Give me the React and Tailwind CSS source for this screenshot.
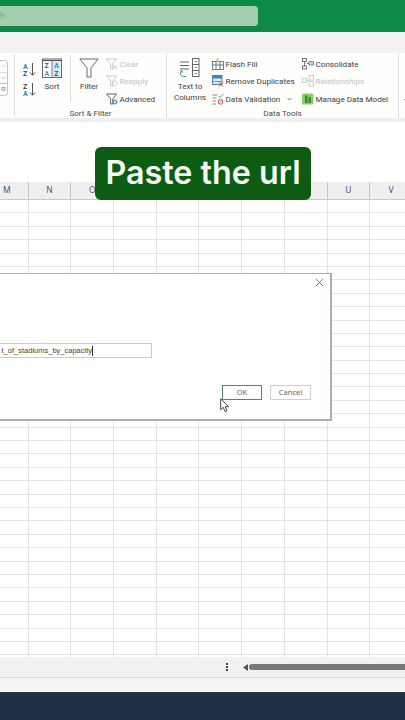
// letters under the caption are not visible in the picture
const columns = ["M", "N", "O", "", "", "", "", "", "U", "V"];
const rows = Array.from({ length: 35 }, (_, i) => i);

function SortAsc() {
  return (
    <svg width="13" height="15" viewBox="0 0 13 15" fontFamily="Roboto, sans-serif" fontSize="7" fontWeight="700">
      <text x="0" y="6.5" fill="#2f7fb8">A</text>
      <text x="0" y="14" fill="#444">Z</text>
      <path d="M9.5 1v12M6.8 10.3l2.7 3 2.7-3" fill="none" stroke="#555" strokeWidth="1" />
    </svg>
  );
}

function SortDesc() {
  return (
    <svg width="13" height="15" viewBox="0 0 13 15" fontFamily="Roboto, sans-serif" fontSize="7" fontWeight="700">
      <text x="0" y="6.5" fill="#444">Z</text>
      <text x="0" y="14" fill="#2f7fb8">A</text>
      <path d="M9.5 1v12M6.8 10.3l2.7 3 2.7-3" fill="none" stroke="#555" strokeWidth="1" />
    </svg>
  );
}

function SortBig() {
  return (
    <svg width="20" height="20" viewBox="0 0 20 20" fontFamily="Roboto, sans-serif" fontSize="7" fontWeight="500">
      <rect x="0.5" y="1" width="19" height="18.5" fill="#fff" stroke="#666" />
      <path d="M0 2.5h20" stroke="#555" strokeWidth="1.2" />
      <rect x="10.5" y="3" width="8" height="16" fill="#d5e6f2" />
      <path d="M10 2.5v17" stroke="#777" />
      <text x="2.6" y="10" fill="#444">Z</text>
      <text x="2.6" y="17.5" fill="#2f7fb8">A</text>
      <text x="12.2" y="10" fill="#2f7fb8">A</text>
      <text x="12.2" y="17.5" fill="#444">Z</text>
    </svg>
  );
}

function FunnelBig() {
  return (
    <svg width="20" height="20" viewBox="0 0 20 20">
      <path d="M0.8 1h18.4L12 9.8V19H8V9.8Z" fill="#fff" stroke="#666" strokeWidth="1" />
    </svg>
  );
}

function FunnelSmall({ color, mark }) {
  return (
    <svg width="12" height="12" viewBox="0 0 12 12" fill="none">
      <path d="M0.5 1h10L6.8 5.8V11H4.6V5.8Z" stroke={color} strokeWidth="0.9" />
      {mark === "clear" && <path d="M7.5 7.5l3.5 3.5M11 7.5l-3.5 3.5" stroke={color} strokeWidth="0.9" />}
      {mark === "reapply" && <path d="M11 7.5a2.4 2.4 0 1 0-.6 2.6M11 6.5v1.6H9.4" stroke={color} strokeWidth="0.8" />}
      {mark === "advanced" && <circle cx="9" cy="9" r="2" fill="#cfe3f1" stroke="#2f7fb8" strokeWidth="1" />}
    </svg>
  );
}

function TextToColumns() {
  return (
    <svg width="24" height="20" viewBox="0 0 24 20" fill="none">
      <path d="M2 4h9M2 7.5h9M2 11h9" stroke="#666" />
      <rect x="14.5" y="0.5" width="6.5" height="18" fill="#fff" stroke="#666" />
      <path d="M14.5 6.5h6.5M14.5 12.5h6.5" stroke="#666" />
      <path d="M16.5 3.5h2.5M16.5 9.5h2.5M16.5 15.5h2.5" stroke="#888" />
      <path d="M8 18.5H5.5a3 3 0 0 1-1.5-5.6M4 12.9l-1.8-.2M4 12.9l.2 2" stroke="#3a9a8c" />
    </svg>
  );
}

function FlashFillIcon() {
  return (
    <svg width="12" height="12" viewBox="0 0 12 12" fill="none">
      <rect x="0.5" y="3.5" width="11" height="8" stroke="#41617a" strokeWidth="0.8" />
      <path d="M0.5 7h11M4 3.5v8M8 3.5v8" stroke="#41617a" strokeWidth="0.8" />
      <path d="M5.5 0.5L3.5 4h2L4 7l3.5-4h-2L7 0.5Z" fill="#e6983c" />
    </svg>
  );
}

function RemoveDupIcon() {
  return (
    <svg width="12" height="12" viewBox="0 0 12 12" fill="none">
      <rect x="0.5" y="0.5" width="9.5" height="9" fill="#dcebf6" stroke="#3b82b5" strokeWidth="0.9" />
      <rect x="0.5" y="0.5" width="9.5" height="3" fill="#3b82b5" />
      <path d="M0.5 6.5h9.5" stroke="#3b82b5" strokeWidth="0.7" />
      <path d="M7 7.5l4 4M11 7.5l-4 4" stroke="#c8413b" strokeWidth="1" />
    </svg>
  );
}

function ValidationIcon() {
  return (
    <svg width="12" height="12" viewBox="0 0 12 12" fill="none">
      <path d="M0.5 2h5M0.5 5h4M0.5 8h3.5M0.5 11h3.5" stroke="#666" strokeWidth="0.8" />
      <path d="M6.5 3l1.5 1.5L11.5 0.8" stroke="#4d9b6f" strokeWidth="0.9" />
      <circle cx="8.6" cy="8.8" r="2.4" stroke="#c8413b" strokeWidth="0.9" />
      <path d="M7 10.4l3.2-3.2" stroke="#c8413b" strokeWidth="0.8" />
    </svg>
  );
}

function ConsolidateIcon() {
  return (
    <svg width="12" height="12" viewBox="0 0 12 12" fill="none">
      <rect x="0.5" y="0.5" width="4" height="3" stroke="#555" strokeWidth="0.8" />
      <rect x="0.5" y="8" width="4" height="3" stroke="#555" strokeWidth="0.8" />
      <rect x="7" y="3.7" width="4.5" height="3.3" fill="#bcd9ee" stroke="#3b82b5" strokeWidth="0.8" />
      <path d="M2.5 3.5V8M4.5 5.3H7" stroke="#555" strokeWidth="0.8" />
    </svg>
  );
}

function RelationshipsIcon() {
  return (
    <svg width="12" height="12" viewBox="0 0 12 12" fill="none" stroke="#c4c4c4" strokeWidth="0.8">
      <rect x="0.5" y="3.5" width="4" height="4" />
      <rect x="7" y="0.5" width="4.5" height="4.5" />
      <rect x="7" y="6.5" width="4.5" height="4.5" />
      <path d="M4.5 5.5H7" />
    </svg>
  );
}

function DataModelIcon() {
  return (
    <svg width="12" height="12" viewBox="0 0 12 12">
      <rect x="0" y="0.5" width="11.5" height="11" rx="1.5" fill="#8ccf5c" />
      <rect x="3" y="2.5" width="2.5" height="7.5" fill="#2f8a4c" />
      <rect x="6.5" y="4" width="2.5" height="6" fill="#2f8a4c" />
    </svg>
  );
}

function ToolRow({ icon, label, muted }) {
  return (
    <div className={`flex h-[17.5px] items-center gap-[1.5px] whitespace-nowrap ${muted ? "text-[#c2c2c2]" : "text-[#3d3d3d]"}`}>
      {icon}
      <span>{label}</span>
    </div>
  );
}

function Spinner() {
  return (
    <div className="mt-[6px] flex h-[36px] w-[8px] flex-col rounded-r-sm border border-l-0 border-[#c4c4c4] bg-white">
      <div className="flex flex-1 items-center justify-center border-b border-[#ddd] text-[#bbb]">
        <svg width="5" height="4" viewBox="0 0 5 4" fill="none" stroke="currentColor" strokeWidth="0.8"><path d="M0.5 3l2-2 2 2" /></svg>
      </div>
      <div className="flex flex-1 items-center justify-center border-b border-[#bbb] text-[#bbb]">
        <svg width="5" height="4" viewBox="0 0 5 4" fill="none" stroke="currentColor" strokeWidth="0.8"><path d="M0.5 1l2 2 2-2" /></svg>
      </div>
      <div className="flex flex-1 items-center justify-center text-[#555]">
        <svg width="5" height="5" viewBox="0 0 5 5" fill="none" stroke="currentColor" strokeWidth="0.8"><path d="M0.5 0.8h4M0.5 2l2 2 2-2" /></svg>
      </div>
    </div>
  );
}

function Ribbon() {
  return (
    <div className="flex h-[65px] bg-[#fefefd] font-['Roboto',sans-serif] text-[8.1px] leading-[10px]">
      <div className="w-[15px] shrink-0 py-[1px]">
        <div className="flex h-[62px] w-[15px] border-r border-[#dcdcdc]">
          <Spinner />
        </div>
      </div>

      {/* Sort & Filter */}
      <div className="flex w-[152px] shrink-0 flex-col border-r border-[#dcdcdc]">
        <div className="flex h-[55px] pt-[2px]">
          <div className="ml-[8px] flex w-[13px] flex-col gap-[5px] pt-[7px]">
            <SortAsc />
            <SortDesc />
          </div>
          <div className="ml-[6px] flex w-[20px] flex-col items-center gap-[3px] pt-[3px] text-[#3d3d3d]">
            <SortBig />
            <span>Sort</span>
          </div>
          <div className="ml-[8px] flex h-[47px] w-[9px] border-l border-[#dcdcdc]" />
          <div className="flex w-[20px] flex-col items-center gap-[3px] pt-[3px] text-[#3d3d3d]">
            <FunnelBig />
            <span>Filter</span>
          </div>
          <div className="ml-[7px] flex flex-col">
            <ToolRow icon={<FunnelSmall color="#c4c4c4" mark="clear" />} label="Clear" muted />
            <ToolRow icon={<FunnelSmall color="#c4c4c4" mark="reapply" />} label="Reapply" muted />
            <ToolRow icon={<FunnelSmall color="#555" mark="advanced" />} label="Advanced" />
          </div>
        </div>
        <div className="text-center text-[#4a4a4a]">Sort &amp; Filter</div>
      </div>

      {/* Data Tools */}
      <div className="flex w-[232px] shrink-0 flex-col border-r border-[#dcdcdc]">
        <div className="flex h-[55px] pt-[2px]">
          <div className="ml-[8px] flex w-[30px] flex-col items-center pt-[3px] leading-[11px] text-[#3d3d3d]">
            <TextToColumns />
            <span className="mt-[3px]">Text to</span>
            <span>Columns</span>
          </div>
          <div className="ml-[7px] flex w-[90px] flex-col">
            <ToolRow icon={<FlashFillIcon />} label="Flash Fill" />
            <ToolRow icon={<RemoveDupIcon />} label="Remove Duplicates" />
            <div className="flex items-center gap-[7px]">
              <ToolRow icon={<ValidationIcon />} label="Data Validation" />
              <svg width="5" height="4" viewBox="0 0 5 4" fill="none" stroke="#555" strokeWidth="0.8"><path d="M0.5 1l2 2 2-2" /></svg>
            </div>
          </div>
          <div className="flex flex-col">
            <ToolRow icon={<ConsolidateIcon />} label="Consolidate" />
            <ToolRow icon={<RelationshipsIcon />} label="Relationships" muted />
            <ToolRow icon={<DataModelIcon />} label="Manage Data Model" />
          </div>
        </div>
        <div className="text-center text-[#4a4a4a]">Data Tools</div>
      </div>

      <div className="flex flex-1 items-start pl-[5px] pt-[46px]">
        <div className="h-[1px] w-[2px] bg-[#888]" />
      </div>
    </div>
  );
}

function Sheet() {
  return (
    <div className="flex h-[475px] flex-col overflow-hidden bg-[#fffffd]">
      <div className="-ml-[14px] flex h-[18px] w-[427px] shrink-0 border-b border-[#c8c8c8] bg-[#efeff1]">
        {columns.map((c, i) => (
          <div
            key={i}
            className="flex h-[17px] w-[42.7px] shrink-0 items-center justify-center border-r border-[#c4c4c4] text-[8.5px] text-[#555]"
          >
            {c}
          </div>
        ))}
      </div>
      {rows.map((r) => (
        <div key={r} className="-ml-[14px] flex h-[13.4px] w-[427px] shrink-0 border-b border-[#e4e4e2]">
          {columns.map((c, i) => (
            <div key={i} className="w-[42.7px] shrink-0 border-r border-[#e4e4e2]" />
          ))}
        </div>
      ))}
    </div>
  );
}

function Dialog() {
  return (
    <div className="absolute -left-[10px] top-[273px] flex h-[148px] w-[342px] flex-col border-r-2 border-b-2 border-t border-[#a3b3ab] bg-[#fffffd]">
      <div className="flex justify-end pr-[6px] pt-[4px]">
        <svg width="9" height="9" viewBox="0 0 9 9" stroke="#6a6a6a" strokeWidth="0.9"><path d="M1 1l7 7M8 1l-7 7" /></svg>
      </div>
      <div className="mt-[56px] flex h-[15px] w-[162px] items-center justify-end border border-[#c3d0ca] pr-[58px] font-['Liberation_Sans',sans-serif] text-[7.5px] text-[#444]">
        <span className="border-r border-[#333] leading-[10px]">t_of_stadiums_by_capacity</span>
      </div>
      <div className="mt-[27px] flex justify-end gap-[8px] pr-[19px] text-[7.5px] text-[#666]">
        <div className="flex h-[15px] w-[40px] items-center justify-center border border-[#5f7f75]">OK</div>
        <div className="flex h-[15px] w-[41px] items-center justify-center border border-[#cfcfcf]">Cancel</div>
      </div>
    </div>
  );
}

export default function App() {
  return (
    <div className="relative flex h-[720px] w-[405px] flex-col overflow-hidden bg-[#fffffd] font-['Noto_Sans',sans-serif]">
      {/* title bar */}
      <div className="flex h-[32px] shrink-0 items-start bg-[#0f8a45] pt-[6px]">
        <div className="flex h-[20px] w-[258px] items-center rounded-r-sm bg-[#a4cfae] text-[9px] text-[#6fb486]">h</div>
      </div>
      <div className="h-[21px] shrink-0 bg-[#f3f3f4]" />
      <Ribbon />
      <div className="h-[4px] shrink-0 bg-[#efefef]" />
      <div className="h-[60px] shrink-0 bg-[#fffffd]" />
      <Sheet />

      {/* bottom bars */}
      <div className="flex h-[21px] shrink-0 items-center border-b border-[#d8d8d8] bg-[#f1f1f0]">
        <div className="ml-[226px] flex flex-col gap-[1.5px]">
          <div className="h-[1.5px] w-[1.5px] bg-[#444]" />
          <div className="h-[1.5px] w-[1.5px] bg-[#444]" />
          <div className="h-[1.5px] w-[1.5px] bg-[#444]" />
        </div>
        <svg className="ml-[15px]" width="5" height="7" viewBox="0 0 5 7" fill="#555"><path d="M5 0v7L0 3.5Z" /></svg>
        <div className="ml-[1px] h-[6px] flex-1 rounded-l-full bg-[#777]" />
      </div>
      <div className="h-[14px] shrink-0 border-b border-white bg-[#f4f4f6]" />
      <div className="flex-1 bg-[#1f3145]" />

      {/* caption */}
      <div className="absolute left-[95px] top-[147px] flex h-[53px] w-[216px] items-center justify-center rounded-[6px] bg-[#0c5d13] font-['Inter',sans-serif] text-[32.3px] font-semibold text-[#f5f8f3]">
        Paste the url
      </div>

      <Dialog />

      {/* mouse cursor */}
      <svg className="absolute left-[220px] top-[398px]" width="10" height="15" viewBox="0 0 10 15">
        <path d="M0.7 0.7v11l2.6-2.3 1.8 4.2 1.9-.8-1.8-4.1h3.4Z" fill="#fff" stroke="#333" strokeWidth="0.9" />
      </svg>
    </div>
  );
}
